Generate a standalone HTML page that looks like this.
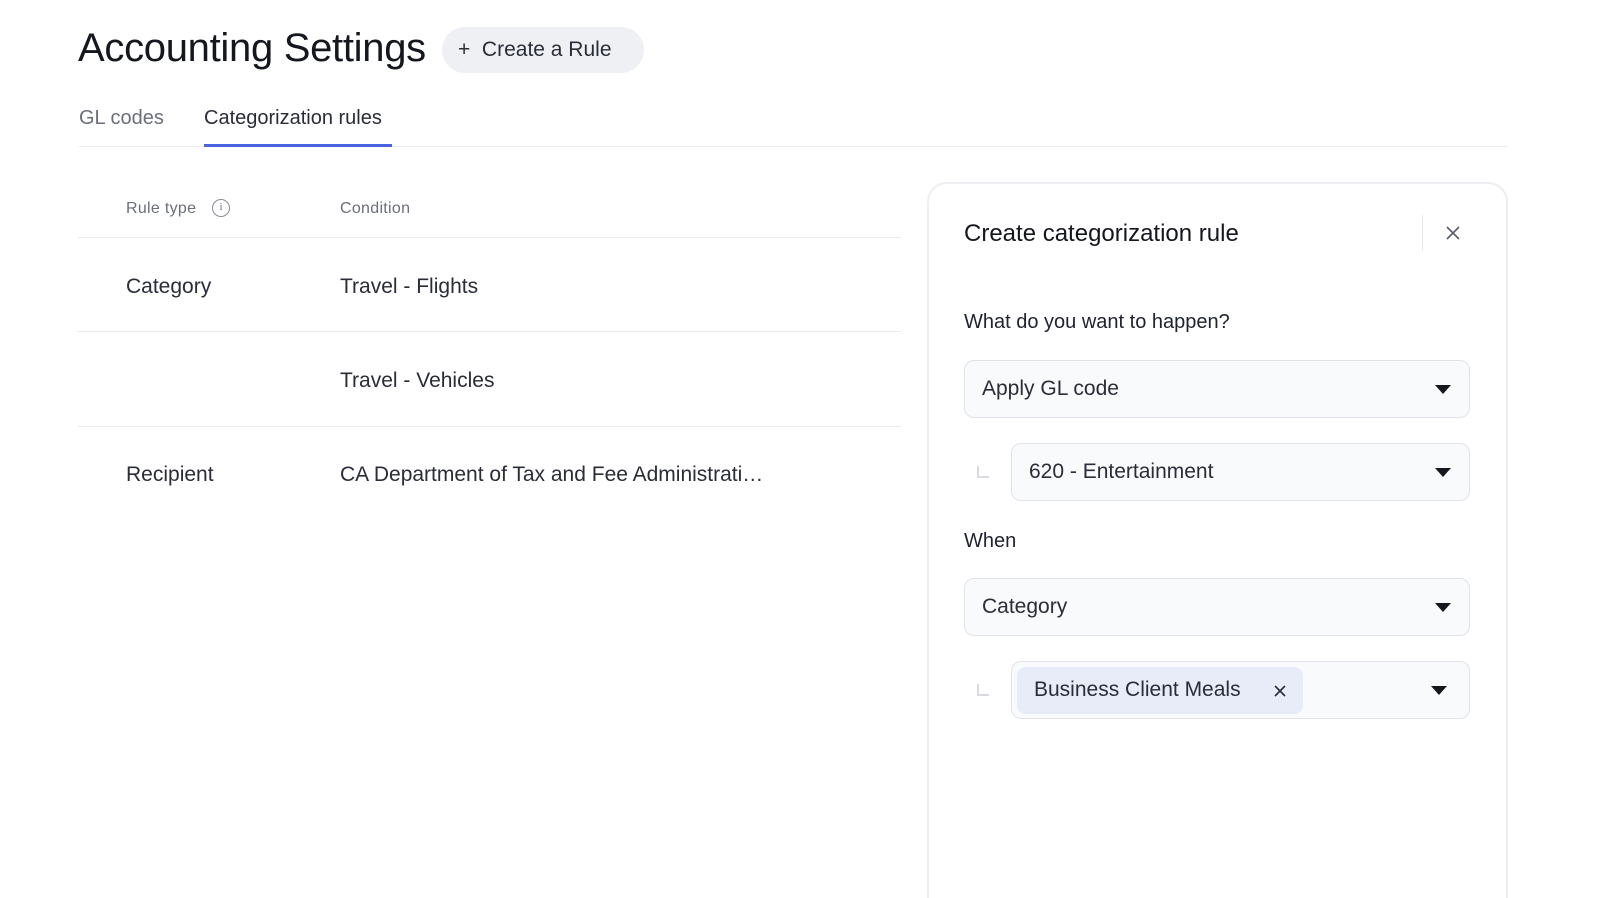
<!DOCTYPE html>
<html><head><meta charset="utf-8"><style>
*{box-sizing:border-box;margin:0;padding:0}
html,body{width:1600px;height:898px;overflow:hidden}
body{background:#fff;font-family:"Liberation Sans",sans-serif;color:#1f2230;position:relative}
.a{position:absolute;white-space:nowrap}
.line{position:absolute;height:1px;background:#e9eaee}
.sel{position:absolute;background:#f9fafc;border:1px solid #e1e3e8;border-radius:10px}
.sel .t{position:absolute;left:17px;top:50%;transform:translateY(-50%);font-size:21px;color:#2a2d38}
.caret{position:absolute;right:18px;top:50%;margin-top:-4px;width:0;height:0;border-left:8px solid transparent;border-right:8px solid transparent;border-top:9px solid #15171f}
.L{position:absolute;width:12px;height:12px;border-left:2px solid #d9dbe1;border-bottom:2px solid #d9dbe1}
</style></head><body>
<div class="a" style="left:78px;top:26px;font-size:40px;color:#15171f;letter-spacing:-0.3px">Accounting Settings</div>
<div class="a" style="left:442px;top:27px;width:202px;height:46px;border-radius:23px;background:#eff0f4"></div>
<div class="a" style="left:458px;top:38px;font-size:21px;color:#2a2d38">+&nbsp; Create a Rule</div>
<div class="a" style="left:79px;top:107px;font-size:20px;color:#6b6f7b">GL codes</div>
<div class="a" style="left:204px;top:107px;font-size:20px;color:#2a2d38">Categorization rules</div>
<div class="line" style="left:79px;top:146px;width:1428px"></div>
<div class="a" style="left:204px;top:144px;width:188px;height:3px;background:#4a63e2"></div>

<div class="a" style="left:126px;top:200px;font-size:16px;color:#6b6f7b;letter-spacing:0.3px">Rule type</div>
<div class="a" style="left:212px;top:199px;width:18px;height:18px;border:1.5px solid #8a8e99;border-radius:50%;font-size:11px;color:#6b6f7b;text-align:center;line-height:15px;font-family:'Liberation Serif',serif">i</div>
<div class="a" style="left:340px;top:200px;font-size:16px;color:#6b6f7b;letter-spacing:0.3px">Condition</div>
<div class="line" style="left:78px;top:237px;width:823px"></div>
<div class="a" style="left:126px;top:275px;font-size:21px;color:#2a2d38">Category</div>
<div class="a" style="left:340px;top:275px;font-size:21px;color:#2a2d38">Travel - Flights</div>
<div class="line" style="left:78px;top:331px;width:823px"></div>
<div class="a" style="left:340px;top:369px;font-size:21px;color:#2a2d38">Travel - Vehicles</div>
<div class="line" style="left:78px;top:426px;width:823px"></div>
<div class="a" style="left:126px;top:463px;font-size:21px;color:#2a2d38">Recipient</div>
<div class="a" style="left:340px;top:463px;font-size:21px;color:#2a2d38">CA Department of Tax and Fee Administrati…</div>

<div class="a" style="left:927px;top:182px;width:581px;height:740px;border:2px solid #eceef1;border-radius:20px"></div>
<div class="a" style="left:964px;top:220px;font-size:24px;color:#15171f">Create categorization rule</div>
<div class="a" style="left:1422px;top:215px;width:1px;height:36px;background:#e9eaee"></div>
<svg class="a" style="left:1446px;top:226px" width="14" height="14" viewBox="0 0 14 14"><path d="M1 1L13 13M13 1L1 13" stroke="#5a5e6a" stroke-width="1.6"/></svg>
<div class="a" style="left:964px;top:311px;font-size:20px;color:#1f2230">What do you want to happen?</div>
<div class="sel" style="left:964px;top:360px;width:506px;height:58px"><span class="t">Apply GL code</span><span class="caret"></span></div>
<div class="L" style="left:977px;top:466px"></div>
<div class="sel" style="left:1011px;top:443px;width:459px;height:58px"><span class="t">620 - Entertainment</span><span class="caret"></span></div>
<div class="a" style="left:964px;top:530px;font-size:20px;color:#1f2230">When</div>
<div class="sel" style="left:964px;top:578px;width:506px;height:58px"><span class="t">Category</span><span class="caret"></span></div>
<div class="L" style="left:977px;top:684px"></div>
<div class="sel" style="left:1011px;top:661px;width:459px;height:58px">
<div class="a" style="left:5px;top:5px;width:286px;height:47px;background:#e8ebf8;border-radius:9px"></div>
<div class="a" style="left:22px;top:16px;font-size:21px;color:#2a2d38">Business Client Meals</div>
<svg class="a" style="left:262px;top:23px" width="12" height="12" viewBox="0 0 12 12"><path d="M1 1L11 11M11 1L1 11" stroke="#2a2d38" stroke-width="1.6"/></svg>
<span class="caret" style="right:22px"></span></div>
</body></html>
